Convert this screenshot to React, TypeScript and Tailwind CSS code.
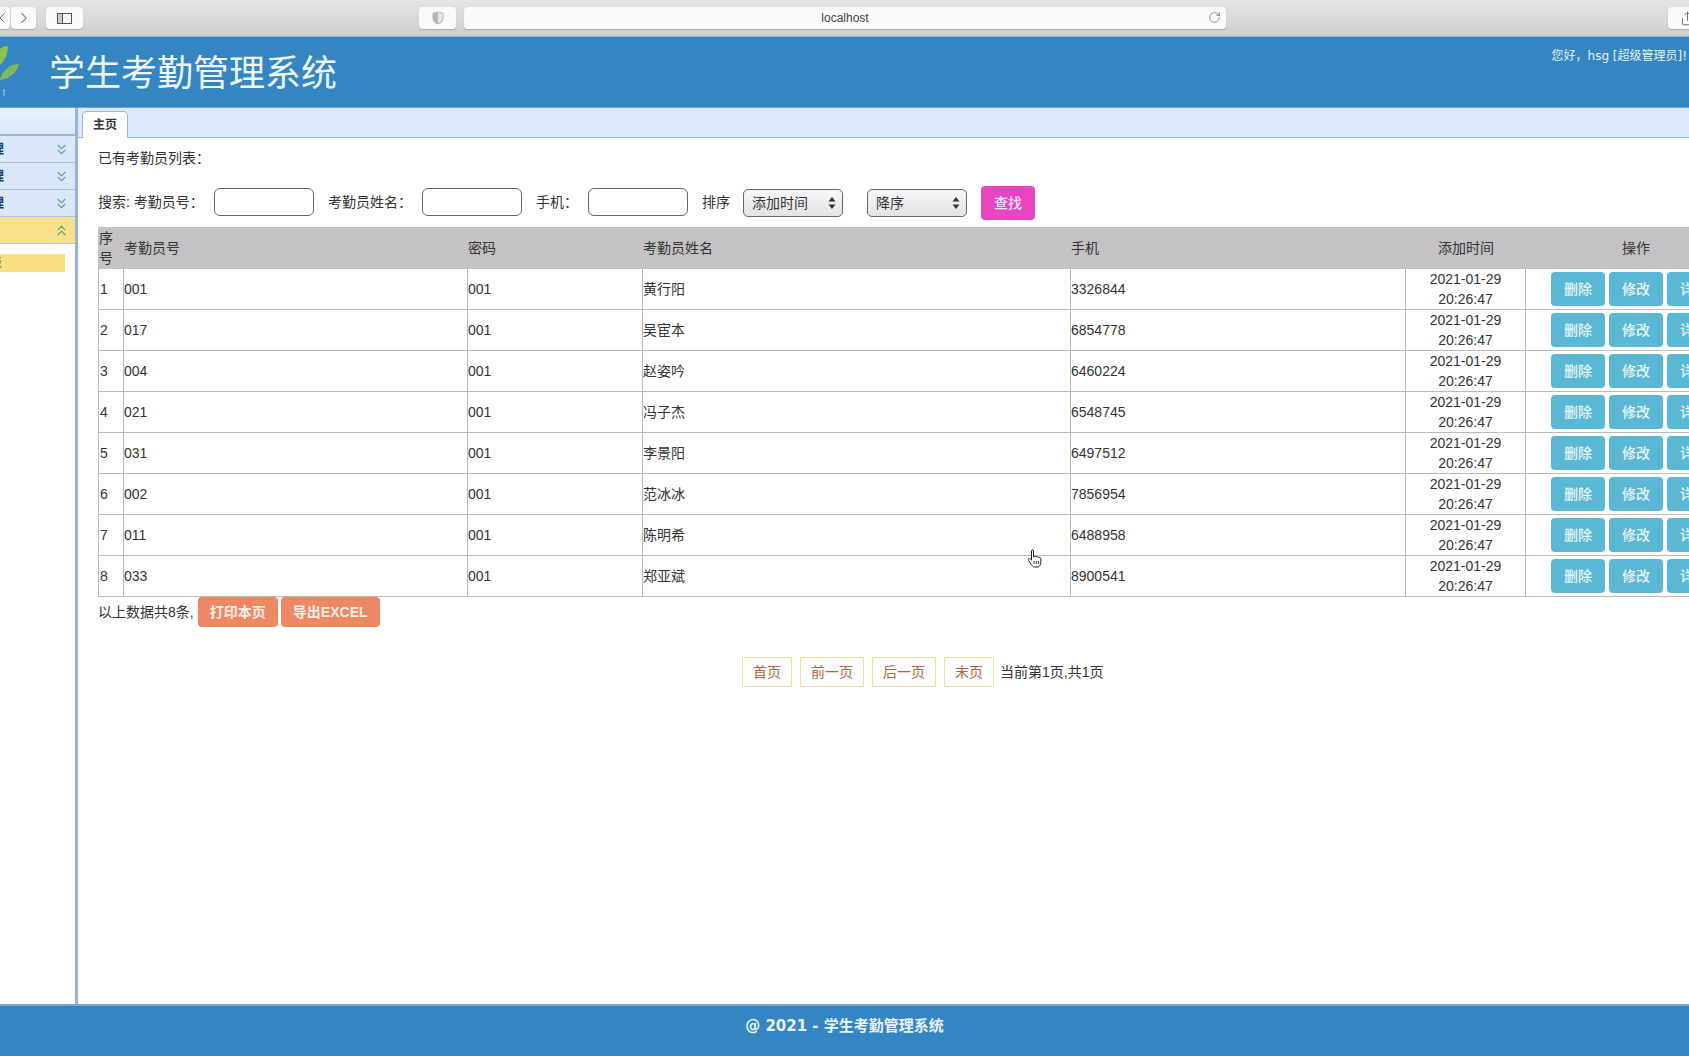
import { ChevronLeft, ChevronRight, ChevronsDown, ChevronsUp, RotateCw, Share } from "lucide-react";

const rows = [
  ["1", "001", "001", "黄行阳", "3326844"],
  ["2", "017", "001", "吴宦本", "6854778"],
  ["3", "004", "001", "赵姿吟", "6460224"],
  ["4", "021", "001", "冯子杰", "6548745"],
  ["5", "031", "001", "李景阳", "6497512"],
  ["6", "002", "001", "范冰冰", "7856954"],
  ["7", "011", "001", "陈明希", "6488958"],
  ["8", "033", "001", "郑亚斌", "8900541"],
];

function BrowserBar() {
  return (
    <div className="flex h-[37px] shrink-0 items-center overflow-hidden border-b border-[#8fb4d6] bg-linear-to-b from-[#e6e5e6] to-[#cfcecf]">
      <div className="ml-[-16px] flex h-[22px] w-[26px] shrink-0 items-center justify-end rounded bg-[#fafafa] text-[#666] shadow-[0_1px_1px_#aaa]">
        <ChevronLeft size={16} strokeWidth={1.5} />
      </div>
      <div className="ml-[1px] flex h-[22px] w-[25px] shrink-0 items-center justify-center rounded bg-[#fafafa] text-[#888] shadow-[0_1px_1px_#aaa]">
        <ChevronRight size={18} strokeWidth={1.5} />
      </div>
      <div className="ml-[10px] flex h-[22px] w-[37px] shrink-0 items-center justify-center rounded bg-[#fafafa] shadow-[0_1px_1px_#aaa]">
        <div className="flex h-[11px] w-[15px] border border-[#555]">
          <div className="w-[5px] border-r border-[#555] bg-[#ccc]" />
        </div>
      </div>
      <div className="ml-[336px] flex h-[22px] w-[37px] shrink-0 items-center justify-center rounded bg-[#fafafa] shadow-[0_1px_1px_#aaa]">
        <svg width="12" height="14" viewBox="0 0 12 14">
          <path d="M6 0.5 L11.5 2 V7 C11.5 10 9 12.5 6 13.5 C3 12.5 0.5 10 0.5 7 V2 Z" fill="#b5b5b5" />
          <path d="M6 1.5 L10.5 2.7 V7 C10.5 9.5 8.5 11.5 6 12.4 Z" fill="#e8e8e8" />
        </svg>
      </div>
      <div className="relative ml-[8px] flex h-[22px] w-[762px] shrink-0 items-center justify-center rounded bg-[#fafafa] font-['Liberation_Sans',sans-serif] text-[12px] text-[#444] shadow-[0_1px_1px_#aaa]">
        localhost
        <RotateCw size={13} strokeWidth={1.3} className="absolute right-[5px] top-[4px] text-[#666]" />
      </div>
      <div className="ml-[442px] flex h-[22px] w-[37px] shrink-0 items-center justify-start rounded bg-[#fafafa] pl-[12px] text-[#555] shadow-[0_1px_1px_#aaa]">
        <Share size={15} strokeWidth={1.3} />
      </div>
    </div>
  );
}

function Header() {
  return (
    <div className="flex h-[71px] shrink-0 border-b border-[#6ea3d0] bg-[#3585c3]">
      <svg width="20" height="70" viewBox="0 0 20 70" className="shrink-0">
        <path d="M0 12 C3 9 6 9 8 9 C8 16 5 24 0 28 Z" fill="#8cc152" />
        <path d="M0 42 C3 33 10 27 19 27 C17 35 10 42 0 43 Z" fill="#7fb95f" />
        <rect x="3.5" y="52" width="1" height="7" fill="#a9cfe0" />
      </svg>
      <h1 className="ml-[29px] mt-[14px] text-[36px] leading-[46px] text-[#eef8fb]">学生考勤管理系统</h1>
      <div className="ml-auto mr-[2px] mt-[10px] whitespace-nowrap font-['DejaVu_Sans','Noto_Sans_CJK_SC',sans-serif] text-[12px] leading-[18px] text-[#e4f4fb]">
        您好，hsg [超级管理员]!
      </div>
    </div>
  );
}

function NavItem({ open = false }: { open?: boolean }) {
  return (
    <div className={open ? "flex h-[27px] items-center justify-between border-b border-[#b9c4cf] bg-[#fbe08c] pr-[5px]" : "flex h-[27px] items-center justify-between border-b border-[#a9c1de] bg-[#dbe8fc] pr-[5px]"}>
      <span className="ml-[-48px] whitespace-nowrap text-[13px] font-bold text-[#1d3a66]">{open ? "" : "考勤管理"}</span>
      {open ? <ChevronsUp size={17} strokeWidth={1.5} className="text-[#5f9a86]" /> : <ChevronsDown size={17} strokeWidth={1.5} className="text-[#5b93b8]" />}
    </div>
  );
}

function Sidebar() {
  return (
    <div className="flex w-[78px] shrink-0 flex-col overflow-hidden border-r-[3px] border-[#95b4d8] bg-white">
      <div className="h-[28px] shrink-0 border-b-2 border-[#9db4d0] bg-linear-to-b from-[#eaf2fe] to-[#dbe7fa]" />
      <NavItem />
      <NavItem />
      <NavItem />
      <NavItem open />
      <div className="mt-[10px] h-[18px] w-[65px] overflow-hidden bg-[#fbdf85] text-[12px] leading-[18px] text-[#555]">
        <span className="ml-[-10px]">表</span>
      </div>
    </div>
  );
}

function Dropdown({ value, width }: { value: string; width: string }) {
  return (
    <div className={`relative mt-[2px] h-[28px] ${width}`}>
      <select
        defaultValue={value}
        className="h-full w-full appearance-none rounded-[5px] border border-[#6b6468] bg-linear-to-b from-[#f8f7f9] to-[#e4e2e6] pl-[8px] text-[14px] text-[#333]"
      >
        <option>{value}</option>
      </select>
      <svg width="8" height="12" viewBox="0 0 8 12" className="pointer-events-none absolute right-[7px] top-[8px]">
        <path d="M4 0 L7.5 4.5 H0.5 Z M4 12 L0.5 7.5 H7.5 Z" fill="#333" />
      </svg>
    </div>
  );
}

function SearchBar() {
  const input = "h-[28px] w-[100px] rounded-[6px] border border-[#666] bg-white";
  return (
    <div className="mt-[17px] flex h-[34px] items-center whitespace-nowrap text-[14px] text-[#333]">
      <span className="w-[116px]">搜索: 考勤员号：</span>
      <input className={input} />
      <span className="ml-[14px] w-[94px]">考勤员姓名：</span>
      <input className={input} />
      <span className="ml-[14px] w-[52px]">手机：</span>
      <input className={input} />
      <span className="ml-[14px] w-[41px]">排序</span>
      <Dropdown value="添加时间" width="w-[100px]" />
      <div className="w-[24px]" />
      <Dropdown value="降序" width="w-[100px]" />
      <button className="ml-[14px] mt-[2px] h-[34px] w-[54px] rounded-[4px] bg-[#e844c3] text-[14px] font-medium text-[#f8e6f4]">查找</button>
    </div>
  );
}

function DataTable() {
  const th = "h-[42px] bg-[#c4c2c5] px-0 font-normal text-[#333] align-middle";
  const td = "h-[41px] border-r border-b border-[#bbb] px-0 align-middle text-[#333]";
  const act = "h-[34px] w-[54px] rounded-[4px] bg-[#5bb8d4] text-[14px] font-medium text-[#e9f6fa]";
  return (
    <div className="mt-[8px] overflow-hidden">
      <table className="w-[1648px] table-fixed border-separate border-spacing-0 text-[14px] leading-[20px]">
        <colgroup>
          <col className="w-[26px]" />
          <col className="w-[344px]" />
          <col className="w-[175px]" />
          <col className="w-[428px]" />
          <col className="w-[335px]" />
          <col className="w-[120px]" />
          <col className="w-[220px]" />
        </colgroup>
        <thead>
          <tr>
            <th className={`${th} pl-[1px] text-left`}>序号</th>
            <th className={`${th} text-left`}>考勤员号</th>
            <th className={`${th} text-left`}>密码</th>
            <th className={`${th} text-left`}>考勤员姓名</th>
            <th className={`${th} text-left`}>手机</th>
            <th className={`${th} text-center`}>添加时间</th>
            <th className={`${th} text-center`}>操作</th>
          </tr>
        </thead>
        <tbody>
          {rows.map((r) => (
            <tr key={r[0]}>
              <td className={`${td} border-l pl-[1px]`}>{r[0]}</td>
              <td className={td}>{r[1]}</td>
              <td className={td}>{r[2]}</td>
              <td className={td}>{r[3]}</td>
              <td className={td}>{r[4]}</td>
              <td className={`${td} text-center`}>2021-01-29<br />20:26:47</td>
              <td className={`${td} border-r-0`}>
                <div className="flex justify-center gap-[4px]">
                  <button className={act}>删除</button>
                  <button className={act}>修改</button>
                  <button className={act}>详情</button>
                </div>
              </td>
            </tr>
          ))}
        </tbody>
      </table>
    </div>
  );
}

function Pager() {
  const page = "flex h-[30px] items-center justify-center border border-[#efe59a] text-[14px] text-[#b5623c]";
  return (
    <div className="mt-[30px] flex items-center pl-[644px] text-[14px] text-[#333]">
      <div className={`${page} w-[50px]`}>首页</div>
      <div className={`${page} ml-[8px] w-[64px]`}>前一页</div>
      <div className={`${page} ml-[8px] w-[64px]`}>后一页</div>
      <div className={`${page} ml-[8px] w-[50px]`}>末页</div>
      <span className="ml-[6px]">当前第1页,共1页</span>
    </div>
  );
}

export default function App() {
  return (
    <div className="relative flex h-[1056px] w-[1689px] flex-col overflow-hidden bg-white font-['Liberation_Sans','Noto_Sans_CJK_SC',sans-serif]">
      <BrowserBar />
      <Header />
      <div className="flex min-h-0 flex-1">
        <Sidebar />
        <div className="flex min-w-0 flex-1 flex-col">
          <div className="flex h-[30px] shrink-0 items-end border-b border-[#95b8e7] bg-[#dce8fc] pl-[4px]">
            <div className="mb-[-1px] flex h-[27px] w-[46px] items-center justify-center rounded-t-[5px] border border-b-0 border-[#95b8e7] bg-white text-[12px] font-bold text-[#333]">主页</div>
          </div>
          <div className="pl-[20px]">
            <div className="mt-[10px] text-[14px] leading-[20px] text-[#333]">已有考勤员列表：</div>
            <SearchBar />
            <DataTable />
            <div className="flex items-center text-[14px] text-[#333]">
              <span>以上数据共8条,</span>
              <button className="ml-[4px] h-[30px] w-[80px] rounded-[4px] bg-[#ec8862] text-[14px] font-bold text-[#fdeee8]">打印本页</button>
              <button className="ml-[3px] h-[30px] w-[99px] rounded-[4px] bg-[#ec8862] text-[14px] font-bold text-[#fdeee8]">导出EXCEL</button>
            </div>
            <Pager />
          </div>
        </div>
      </div>
      <div className="flex h-[52px] shrink-0 items-center justify-center border-t-2 border-[#74a6d2] bg-[#3585c3] pb-[9px] font-['DejaVu_Sans','Noto_Sans_CJK_SC',sans-serif] text-[15px] font-semibold text-[#e8f3fa]">
        @ 2021 - 学生考勤管理系统
      </div>
      <svg width="16" height="20" viewBox="0 0 16 20" className="absolute left-[1027px] top-[549px]">
        <path d="M4.5 2 C4.5 0.5 6.5 0.5 6.5 2 V8 L7.5 7.5 C8 7 9.5 7 9.5 8 C10 7.3 11.5 7.5 11.5 8.7 C12 8 13.8 8.3 13.8 9.8 V13 C13.8 15.5 12.5 17.5 11 18 H6.5 C5 17 3.5 14.5 1.5 11.5 C0.5 10 2 8.7 3.2 9.8 L4.5 11 Z" fill="#fff" stroke="#222" strokeWidth="1" />
        <path d="M7 12 V15 M9.3 12 V15 M11.6 12 V15" stroke="#222" strokeWidth="0.9" />
      </svg>
    </div>
  );
}
